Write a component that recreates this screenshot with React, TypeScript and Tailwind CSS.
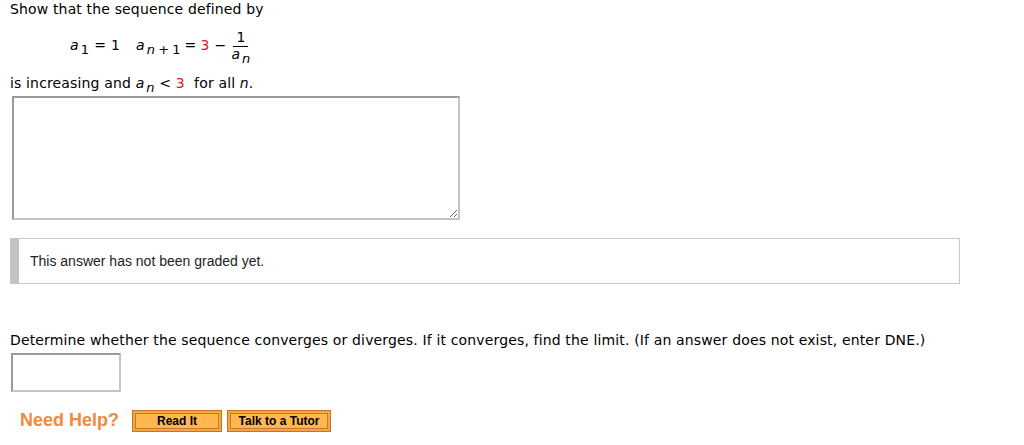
import React from "react";

const verdana = { fontFamily: '"DejaVu Sans", Verdana, sans-serif' };
const arial = { fontFamily: '"Liberation Sans", Arial, sans-serif' };

function Red({ children }: { children: React.ReactNode }) {
  return <span className="text-[#e0141e]">{children}</span>;
}

function A({ sub }: { sub: React.ReactNode }) {
  return (
    <span className="whitespace-nowrap">
      <i>a</i>
      <span className="inline-block ml-[2px] text-[13px] relative top-[4px] leading-none">{sub}</span>
    </span>
  );
}

function OrangeButton({ label, w }: { label: string; w: string }) {
  return (
    <button className={`${w} h-[22px] border border-[#c8732a] bg-[#f7a540] p-[2px]`}>
      <span
        className="flex h-full w-full items-center justify-center border border-[#c87a30] bg-[#ffb84f] text-[12px] font-bold text-black leading-none"
        style={arial}
      >
        {label}
      </span>
    </button>
  );
}

export default function App() {
  return (
    <div
      className="bg-white w-[1024px] h-[445px] text-[14px] tracking-[0.15px] text-black overflow-hidden"
      style={verdana}
    >
      <div className="pl-[10px] pt-[1px] leading-[17px]">Show that the sequence defined by</div>

      <div className="flex items-center pl-[70px] pt-[15px] h-[40px]">
        <span className="flex items-center gap-[5px]">
          <A sub="1" />
          <span>=</span>
          <span>1</span>
        </span>
        <span className="flex items-center gap-[4px] ml-[16px]">
          <A sub={<span className="tracking-normal [word-spacing:-1px]"><i>n</i> + 1</span>} />
          <span>=</span>
          <Red>3</Red>
          <span className="mx-[1px]">−</span>
          <span className="inline-flex flex-col items-center leading-[16px]">
            <span className="border-b border-black px-[3px] pb-[1px]">1</span>
            <span className="-mt-[1px]">
              <A sub={<i>n</i>} />
            </span>
          </span>
        </span>
      </div>

      <div className="pl-[10px] pt-[17px] leading-[17px]">
        is increasing and <A sub={<i>n</i>} /> &lt; <Red>3</Red> &nbsp;for all <i>n</i>.
      </div>

      <textarea className="block ml-[12px] mt-[4px] w-[448px] h-[124px] border-2 border-t-[#9a9a9a] border-l-[#9a9a9a] border-r-[#c4c4c4] border-b-[#c4c4c4] bg-white resize outline-none" />

      <div className="ml-[10px] mt-[18px] w-[950px] h-[46px] flex border border-[#c6c6c6]">
        <div className="w-[8px] bg-[#c2c2c2]" />
        <div className="flex items-center pl-[11px] text-[14px] tracking-normal text-[#222]" style={arial}>
          This answer has not been graded yet.
        </div>
      </div>

      <div className="pl-[10px] pt-[48px] leading-[17px]">
        Determine whether the sequence converges or diverges. If it converges, find the limit. (If an answer does not exist, enter DNE.)
      </div>

      <input className="block ml-[11px] mt-[4px] w-[110px] h-[39px] border-2 border-t-[#9a9a9a] border-l-[#9a9a9a] border-r-[#c4c4c4] border-b-[#c4c4c4] bg-white outline-none" />

      <div className="flex items-center pl-[20px] pt-[15px] tracking-normal">
        <span className="text-[18px] font-bold text-[#f08a3c] mr-[13px]" style={arial}>
          Need Help?
        </span>
        <OrangeButton label="Read It" w="w-[90px]" />
        <span className="w-[5px]" />
        <OrangeButton label="Talk to a Tutor" w="w-[104px]" />
      </div>
    </div>
  );
}
